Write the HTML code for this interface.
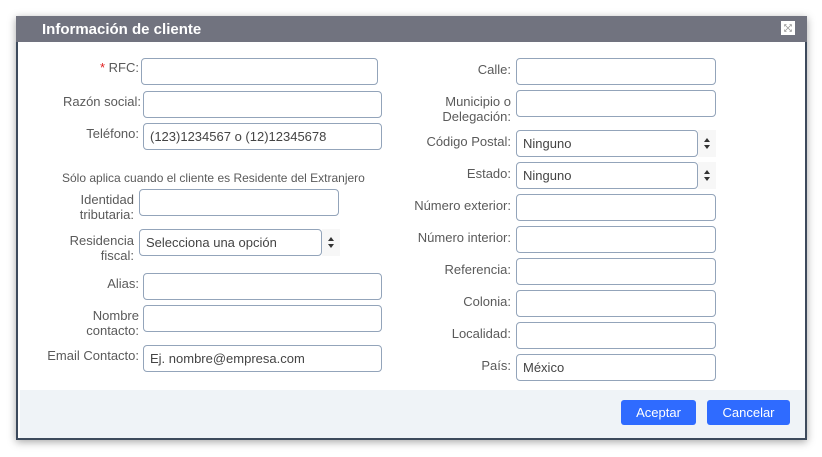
<!DOCTYPE html>
<html><head><meta charset="utf-8"><style>
*{box-sizing:border-box;margin:0;padding:0}
body{width:822px;height:457px;background:#fff;font-family:"Liberation Sans",Arial,sans-serif;position:relative;overflow:hidden}
.dlg{position:absolute;left:16px;top:16px;width:791px;height:424px;background:#fff;border:2px solid #3d4a5c;border-top:none;box-shadow:0 2px 8px rgba(0,0,0,.35)}
.hd{position:absolute;left:16px;top:16px;width:791px;height:26px;background:#71737f;color:#fff;font-weight:bold;font-size:15px;line-height:27px;padding-left:26px}
.x{position:absolute;left:781px;top:21px;width:14px;height:14px;background:#fff}
.ft{position:absolute;left:20px;top:390px;width:785px;height:48px;background:#eff3f7}
.l{position:absolute;font-size:13px;color:#5a5a5a;text-align:right;line-height:15px}
.i{position:absolute;height:27px;border:1px solid #93a4ba;border-radius:4px;background:#fff;font-size:13px;color:#444;line-height:25px;padding-left:6px}
.ar{position:absolute;width:18px;height:27px;background:#f7f7f7}
.ar:before{content:"";position:absolute;left:6px;top:8px;border:3px solid transparent;border-bottom:4px solid #333;border-top:none}
.ar:after{content:"";position:absolute;left:6px;top:15px;border:3px solid transparent;border-top:4px solid #333;border-bottom:none}
.b{position:absolute;top:400px;height:25px;background:#2f6bff;color:#fff;border-radius:3px;font-size:13px;line-height:25px;text-align:center}
</style></head><body>
<div class="dlg"></div>
<div class="hd">Información de cliente</div>
<div class="x"><svg width="14" height="14"><path d="M4 4L10 10M10 4L4 10" stroke="#999" stroke-width="0.8"/><path d="M3.5 3.5h2M3.5 3.5v2M10.5 3.5h-2M10.5 3.5v2M3.5 10.5h2M3.5 10.5v-2M10.5 10.5h-2M10.5 10.5v-2" stroke="#999" stroke-width="0.8"/></svg></div>
<div class="ft"></div>

<div class="l" style="right:683px;top:60px"><span style="color:#e02020">*</span> RFC:</div>
<div class="i" style="left:141px;top:58px;width:237px"></div>
<div class="l" style="right:681px;top:94px">Razón social:</div>
<div class="i" style="left:143px;top:91px;width:239px"></div>
<div class="l" style="right:683px;top:126px">Teléfono:</div>
<div class="i" style="left:143px;top:123px;width:239px">(123)1234567 o (12)12345678</div>
<div class="l" style="left:62px;top:171px;font-size:12px;text-align:left">Sólo aplica cuando el cliente es Residente del Extranjero</div>
<div class="l" style="right:688px;top:192px">Identidad<br>tributaria:</div>
<div class="i" style="left:139px;top:189px;width:200px"></div>
<div class="l" style="right:688px;top:233px">Residencia<br>fiscal:</div>
<div class="i" style="left:139px;top:229px;width:183px">Selecciona una opción</div>
<div class="ar" style="left:322px;top:229px"></div>
<div class="l" style="right:683px;top:276px">Alias:</div>
<div class="i" style="left:143px;top:273px;width:239px"></div>
<div class="l" style="right:683px;top:308px">Nombre<br>contacto:</div>
<div class="i" style="left:143px;top:305px;width:239px"></div>
<div class="l" style="right:683px;top:348px">Email Contacto:</div>
<div class="i" style="left:143px;top:345px;width:239px">Ej. nombre@empresa.com</div>

<div class="l" style="right:311px;top:62px">Calle:</div>
<div class="i" style="left:516px;top:58px;width:200px"></div>
<div class="l" style="right:311px;top:94px">Municipio o<br>Delegación:</div>
<div class="i" style="left:516px;top:90px;width:200px"></div>
<div class="l" style="right:311px;top:134px">Código Postal:</div>
<div class="i" style="left:516px;top:130px;width:182px">Ninguno</div>
<div class="ar" style="left:698px;top:130px"></div>
<div class="l" style="right:311px;top:166px">Estado:</div>
<div class="i" style="left:516px;top:162px;width:182px">Ninguno</div>
<div class="ar" style="left:698px;top:162px"></div>
<div class="l" style="right:311px;top:198px">Número exterior:</div>
<div class="i" style="left:516px;top:194px;width:200px"></div>
<div class="l" style="right:311px;top:230px">Número interior:</div>
<div class="i" style="left:516px;top:226px;width:200px"></div>
<div class="l" style="right:311px;top:262px">Referencia:</div>
<div class="i" style="left:516px;top:258px;width:200px"></div>
<div class="l" style="right:311px;top:294px">Colonia:</div>
<div class="i" style="left:516px;top:290px;width:200px"></div>
<div class="l" style="right:311px;top:326px">Localidad:</div>
<div class="i" style="left:516px;top:322px;width:200px"></div>
<div class="l" style="right:311px;top:358px">País:</div>
<div class="i" style="left:516px;top:354px;width:200px">México</div>

<div class="b" style="left:621px;width:75px">Aceptar</div>
<div class="b" style="left:707px;width:83px">Cancelar</div>
</body></html>
